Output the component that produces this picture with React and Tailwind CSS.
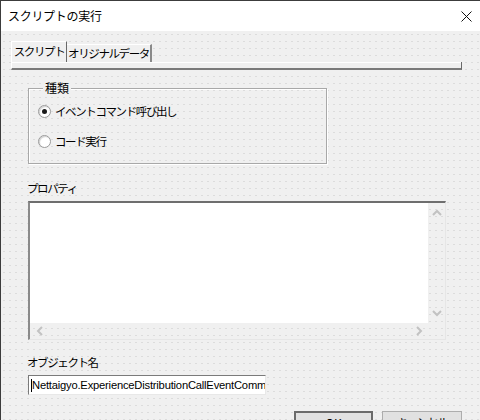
import React from "react";

// Windows フォーム風: スクリプトの実行ダイアログ

const jp = { fontFamily: '"Noto Sans CJK JP", "Noto Sans", sans-serif' };
const latin = { fontFamily: '"Liberation Sans", "Noto Sans CJK JP", sans-serif' };

function Radio({ checked, label, className = "" }) {
  return (
    <div className={`flex items-center h-[16px] ${className}`}>
      <span className="w-[13px] h-[13px] rounded-full border border-[#9a9a9a] bg-white flex items-center justify-center shadow-[inset_1px_1px_1px_#d0d0d0]">
        {checked && <span className="w-[5px] h-[5px] rounded-full bg-[#1a1a1a]" />}
      </span>
      <span className="ml-[4px] text-[11.5px] leading-[16px] tracking-[-1.4px] whitespace-nowrap">{label}</span>
    </div>
  );
}

function Chevron({ dir }) {
  const paths = {
    up: "M1 6 L5 2 L9 6",
    down: "M1 2 L5 6 L9 2",
    left: "M6 1 L2 5 L6 9",
    right: "M2 1 L6 5 L2 9",
  };
  const vertical = dir === "up" || dir === "down";
  return (
    <svg
      width={vertical ? 10 : 8}
      height={vertical ? 8 : 10}
      viewBox={vertical ? "0 0 10 8" : "0 0 8 10"}
    >
      <path d={paths[dir]} fill="none" stroke="#c2c2c2" strokeWidth="2" />
    </svg>
  );
}

export default function App() {
  return (
    <div
      className="w-[480px] h-[420px] overflow-hidden flex flex-col border-t border-l border-[#3c3c3c] text-black"
      style={jp}
    >
      {/* タイトルバー */}
      <div className="h-[30px] bg-white flex items-center justify-between pl-[7px] pr-[8px] shrink-0">
        <span className="text-[12px] tracking-[-0.3px]">スクリプトの実行</span>
        <svg width="11" height="11" viewBox="0 0 11 11">
          <path d="M0.5 0.5 L10.5 10.5 M10.5 0.5 L0.5 10.5" stroke="#111" strokeWidth="1" />
        </svg>
      </div>

      {/* 本体 */}
      <div className="flex-1 bg-[#f0f0f0] bg-[radial-gradient(circle,#dcdcdc_0.5px,transparent_0.8px)] bg-[length:6px_7px] flex flex-col">
        {/* タブ */}
        <div className="ml-[10px] mt-[10px] w-[451px]">
          <div className="flex items-end h-[21px]">
            <div className="w-[56px] h-[21px] bg-[#f0f0f0] border-t border-l border-white border-r border-r-[#696969] flex items-center justify-center text-[11.5px] tracking-[-1.4px] whitespace-nowrap">
              スクリプト
            </div>
            <div className="w-[85px] h-[18px] bg-[#f0f0f0] border-t border-white border-r-2 border-r-[#8a8a8a] flex items-center justify-center text-[11.5px] tracking-[-1.4px] whitespace-nowrap">
              オリジナルデータ
            </div>
          </div>
          <div className="h-[8px] bg-[#f0f0f0] border-l border-white border-r border-r-[#696969] border-b-2 border-b-[#7a7a7a] shadow-[inset_0_1px_0_#ffffff]" />
        </div>

        {/* 種類 */}
        <fieldset className="ml-[27px] mt-[10px] w-[299px] h-[84px] border border-[#a8a8a8] shadow-[inset_1px_1px_0_#ffffff,1px_1px_0_#ffffff] px-[9px]">
          <legend className="ml-[5px] px-[2px] text-[12px] leading-[16px] bg-[#f0f0f0]">種類</legend>
          <Radio checked label="イベントコマンド呼び出し" className="mt-[7px]" />
          <Radio label="コード実行" className="mt-[14px]" />
        </fieldset>

        {/* プロパティ */}
        <div className="ml-[26px] mt-[16px] text-[11.5px] leading-[16px] tracking-[-1.4px]">プロパティ</div>
        <div className="ml-[27px] mt-[5px] w-[418px] h-[139px] border-t-2 border-l-2 border-t-[#6e6e6e] border-l-[#8a8a8a] border-r border-b border-r-[#e6e6e6] border-b-[#e6e6e6] flex flex-col">
          <div className="flex flex-1">
            <div className="flex-1 bg-white" />
            <div className="w-[17px] flex flex-col items-center justify-between py-[6px]">
              <Chevron dir="up" />
              <Chevron dir="down" />
            </div>
          </div>
          <div className="h-[16px] flex items-center justify-between pl-[6px] pr-[22px]">
            <Chevron dir="left" />
            <Chevron dir="right" />
          </div>
        </div>

        {/* オブジェクト名 */}
        <div className="ml-[26px] mt-[14px] text-[11.5px] leading-[16px] tracking-[-1.4px]">オブジェクト名</div>
        <div className="ml-[27px] mt-[5px] w-[238px] h-[20px] bg-white border border-[#7a7a7a] border-r-[#e8e8e8] border-b-[#e8e8e8] overflow-hidden whitespace-nowrap flex items-center pl-[2px]">
          <span className="w-px h-[13px] bg-black shrink-0" />
          <span className="text-[11.2px] leading-[16px] tracking-[-0.2px]" style={latin}>
            Nettaigyo.ExperienceDistributionCallEventCommand
          </span>
        </div>

        {/* ボタン */}
        <div className="flex mt-[16px] ml-[293px] gap-[9px]">
          <div className="w-[79px] h-[24px] bg-[#e1e1e1] border-2 border-[#6b6b6b] flex items-center justify-center text-[12px]">
            OK
          </div>
          <div className="w-[80px] h-[24px] bg-[#e1e1e1] border border-[#adadad] flex items-center justify-center text-[11.5px] tracking-[-1.4px]">
            キャンセル
          </div>
        </div>
      </div>
    </div>
  );
}
